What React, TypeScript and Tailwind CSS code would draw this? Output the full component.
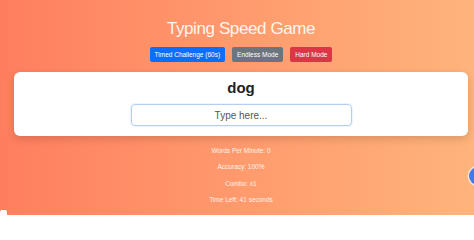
import React from "react";

export default function App() {
  return (
    <div className="relative h-[215px] w-full overflow-hidden bg-gradient-to-r from-[#ff7e5f] to-[#feb47b] font-['Liberation_Sans',Arial,sans-serif]">
      <div className="ml-[14px] mr-[6px] flex flex-col items-center pt-[19px]">
        <h1 className="text-[17px] leading-[20px] tracking-[-0.4px] text-[#fff6ee]">Typing Speed Game</h1>
        <div className="mt-[8px] flex gap-[7px]">
          <button className="h-[15px] rounded-[2px] bg-[#0d6efd] px-[5px] text-[6.5px] leading-[15px] text-white">Timed Challenge (60s)</button>
          <button className="h-[15px] rounded-[2px] bg-[#6c757d] px-[5px] text-[6.5px] leading-[15px] text-white">Endless Mode</button>
          <button className="h-[15px] rounded-[2px] bg-[#dc3545] px-[5px] text-[6.5px] leading-[15px] text-white">Hard Mode</button>
        </div>
        <div className="mt-[10px] flex w-full flex-col items-center rounded-[6px] bg-white pt-[7px] pb-[10px] shadow-[0_3px_8px_rgba(0,0,0,0.15)]">
          <div className="text-[15px] font-bold leading-[18px] text-[#222]">dog</div>
          <input
            className="mt-[7px] h-[22px] w-[221px] rounded-[4px] border-[1.5px] border-[#b4cdf3] text-center text-[10px] text-[#333] outline-none shadow-[0_0_0_1px_rgba(13,110,253,0.08)] placeholder:text-[#555]"
            placeholder="Type here..."
          />
        </div>
        <div className="mt-[7px] flex flex-col items-center text-[6.5px] leading-[16.3px] text-[#fff3ea]">
          <p>Words Per Minute: 0</p>
          <p>Accuracy: 100%</p>
          <p>Combo: x1</p>
          <p>Time Left: 41 seconds</p>
        </div>
      </div>
      <div className="absolute left-[469px] top-[167px] h-[18px] w-[18px] rounded-full bg-[#3b7cf2] shadow-[0_0_0_1.5px_rgba(255,255,255,0.6)]" />
      <div className="absolute left-0 top-[210px] h-[8px] w-[7px] rounded-[2px] bg-white" />
    </div>
  );
}
